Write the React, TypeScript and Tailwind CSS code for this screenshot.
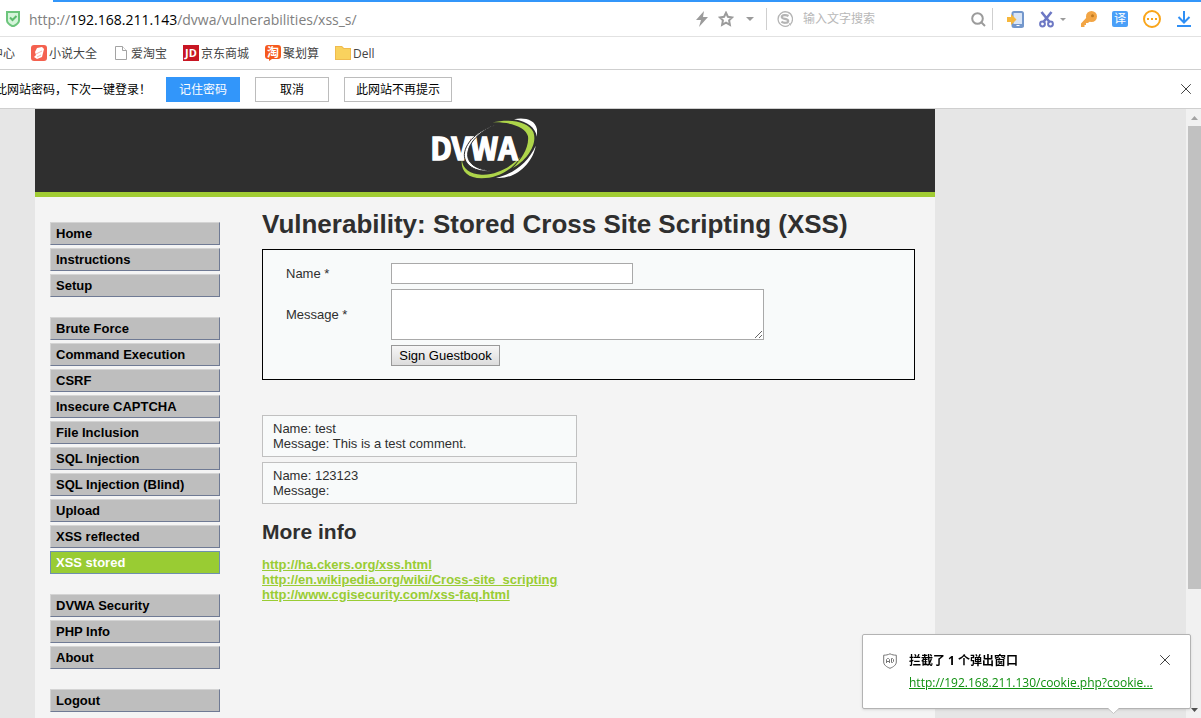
import React, { useState } from 'react'
import { X } from 'lucide-react'

interface Entry { name: string; message: string }

const MENU: string[][] = [
  ['Home', 'Instructions', 'Setup'],
  ['Brute Force', 'Command Execution', 'CSRF', 'Insecure CAPTCHA', 'File Inclusion', 'SQL Injection', 'SQL Injection (Blind)', 'Upload', 'XSS reflected', 'XSS stored'],
  ['DVWA Security', 'PHP Info', 'About'],
  ['Logout'],
]

const ENTRIES: Entry[] = [
  { name: 'test', message: 'This is a test comment.' },
  { name: '123123', message: '' },
]

const LINKS = [
  'http://ha.ckers.org/xss.html',
  'http://en.wikipedia.org/wiki/Cross-site_scripting',
  'http://www.cgisecurity.com/xss-faq.html',
]

// ─── Toolbar icons ───
const ShieldIcon = () => (
  <svg width="14" height="16" viewBox="0 0 14 16" fill="none">
    <path d="M1 1h12v8.500c0 3-3 4.500-6 6-3-1.500-6-3-6-6z" fill="#d5f5da" stroke="#6cc57c" strokeWidth="2" />
    <path d="M4 6.500l2.500 2.500L10.500 5" stroke="#5cbb6d" strokeWidth="2" />
  </svg>
)

const BoltIcon = () => (
  <svg width="12" height="16" viewBox="0 0 12 16" fill="#9b9b9b">
    <path d="M8 0L0 9h5l-2 7 9-10H7z" />
  </svg>
)

const StarIcon = () => (
  <svg width="16" height="16" viewBox="0 0 16 16" fill="none" stroke="#9b9b9b" strokeWidth="2">
    <path d="M8 1.800l1.900 4 4.300.6-3.100 3 .8 4.400L8 11.700l-3.900 2.100.8-4.400-3.100-3 4.300-.6z" />
  </svg>
)

const Caret: React.FC<{ size?: number }> = ({ size = 8 }) => (
  <svg width={size} height={size / 2} viewBox="0 0 8 4" fill="#9b9b9b"><path d="M0 0h8L4 4z" /></svg>
)

const SogouIcon = () => (
  <svg width="16" height="16" viewBox="0 0 16 16" fill="none" stroke="#b4b4b4">
    <path d="M13.500 13A7.200 7.200 0 1 0 12 14.200" strokeWidth="1.300" />
    <path d="M11.500 5C9.500 3.700 4.800 3.700 4.800 6c0 2.500 6.400 1.300 6.400 3.900 0 2.400-4.700 2.300-6.800.8" strokeWidth="2.200" />
    <path d="M12 12.500l1.800 1.800" strokeWidth="1.300" />
  </svg>
)

const SearchIcon = () => (
  <svg width="15" height="15" viewBox="0 0 15 15" fill="none" stroke="#9b9b9b" strokeWidth="2">
    <circle cx="6.500" cy="6.500" r="5.300" />
    <path d="M10.500 10.500l3.500 3.500" />
  </svg>
)

const PhoneIcon = () => (
  <svg width="17" height="17" viewBox="0 0 17 17">
    <rect x="5.500" y="1" width="10.500" height="15" rx="1.500" fill="#d9e5f6" stroke="#7397cc" strokeWidth="2" />
    <path d="M5 13h11.500v3H5z" fill="#7397cc" />
    <path d="M9.500 14h3v1h-3z" fill="#fff" />
    <path d="M0 6h4V3l5.500 5.500L4 14v-3H0z" fill="#f6b73c" />
  </svg>
)

const ScissorsIcon = () => (
  <svg width="16" height="17" viewBox="0 0 16 17" fill="none" stroke="#6d78c4">
    <path d="M2.500 1l8.500 10.500M12.500 1L4 11.500" strokeWidth="2.600" />
    <circle cx="3.500" cy="13" r="2.400" strokeWidth="2" />
    <circle cx="11.500" cy="13" r="2.400" strokeWidth="2" />
  </svg>
)

const KeyIcon = () => (
  <svg width="16" height="16" viewBox="0 0 16 16" fill="#f2a545">
    <circle cx="10.500" cy="5.500" r="5.500" />
    <path d="M6 6L0 12.500V16h3.500v-2H5v-2h2l3-3z" />
    <circle cx="11.500" cy="4.800" r="1.500" fill="#c17a20" />
  </svg>
)

const MoreIcon = () => (
  <svg width="18" height="18" viewBox="0 0 18 18" fill="#f9a51a">
    <circle cx="9" cy="9" r="8" fill="none" stroke="#f9a51a" strokeWidth="2" />
    <path d="M4 8h2v2H4zM8 8h2v2H8zM12 8h2v2h-2z" />
  </svg>
)

const DownloadIcon = () => (
  <svg width="14" height="16" viewBox="0 0 14 16" fill="none" stroke="#2f8ff5" strokeWidth="2">
    <path d="M7 0v11M1.500 6L7 11.500 12.500 6M0 15h14" />
  </svg>
)

// ─── Bookmark icons ───
const NovelIcon = () => (
  <svg width="16" height="16" viewBox="0 0 16 16">
    <rect width="16" height="16" rx="3" fill="#f4614f" />
    <path d="M6 3l5-1 2 2-1 4-1 4-5 2-3-2 2-2-1-3z" fill="#fff" />
    <path d="M5 9l6-3M6 12l4-2" stroke="#f7b5ad" />
  </svg>
)

const PageIcon = () => (
  <svg width="16" height="16" viewBox="0 0 16 16" fill="#fff" stroke="#a3a3a3">
    <path d="M2.500 1.500h7l4 4v9h-11z" />
    <path d="M9.500 1.500v4h4" />
  </svg>
)

const JdIcon = () => (
  <svg width="16" height="16" viewBox="0 0 16 16">
    <rect width="16" height="16" fill="#c81623" />
    <text x="8" y="12" textAnchor="middle" fontSize="11" fontWeight="bold" fill="#fff" fontFamily="Open Sans, sans-serif">JD</text>
  </svg>
)

const TaoIcon = () => (
  <svg width="16" height="16" viewBox="0 0 16 16" overflow="visible">
    <path d="M3 0h10a3 3 0 0 1 3 3v8a3 3 0 0 1-3 3H7l-3 2v-2H3a3 3 0 0 1-3-3V3a3 3 0 0 1 3-3z" fill="#f5591c" />
    <text x="8" y="12" textAnchor="middle" fontSize="12" fontWeight="bold" fill="#fff" fontFamily="Noto Sans CJK SC, sans-serif">淘</text>
  </svg>
)

const FolderIcon = () => (
  <svg width="16" height="14" viewBox="0 0 16 14">
    <path d="M0 0h7l2 2h7v12H0z" fill="#f0bb4e" />
    <path d="M1 1h5.500l2 2H15v10H1z" fill="#f9d25e" />
  </svg>
)

const AdShieldIcon = () => (
  <svg width="14" height="16" viewBox="0 0 14 16" fill="none" stroke="#777">
    <path d="M7 .8c2 1 4 1.400 6.300 1.400V9c0 3-3 5-6.300 6.300C3.700 14 .7 12 .7 9V2.200C3 2.200 5 1.800 7 .8z" />
    <path d="M3.500 10V6.500l1-1h1l1 1V10M3.500 8.500h3M8.500 5.500v4h1l1-1v-2l-1-1z" />
  </svg>
)

const Logo = () => (
  <svg width="106" height="61" viewBox="0 0 318 183" overflow="visible" aria-label="DVWA">
    <g transform="translate(-96 -41)">
      <path d="M186 165c0 30 29 48 64 46 45-2 80-22 112-54-27 43-72 65-117 65-45 0-65-27-59-57z" fill="#aed54a" />
      <text x="91" y="166" fontSize="91" fontWeight="bold" fill="#fff" stroke="#fff" strokeWidth="4" fontFamily="Noto Sans CJK SC, sans-serif">DVWA</text>
      <path d="M302 60C250 70 205 110 203 150c-1 30 32 47 72 50-50 5-83-18-82-50 3-40 52-82 109-90z" fill="#fff" stroke="#2f2f2f" strokeWidth="3" />
      <path d="M278 54c52-12 107-3 122 29 14 37-21 86-62 108 25-25 50-60 46-95-6-28-54-44-106-42z" fill="#aed54a" />
      <path d="M342 45c28-6 63-1 69 30v22c-6-27-26-45-69-52z" fill="#fff" />
      <path d="M407 124c-7 48-57 102-119 97 47-10 97-45 119-97z" fill="#fff" />
    </g>
  </svg>
)

const BOOKMARKS = [
  { label: '小说大全', icon: <NovelIcon /> },
  { label: '爱淘宝', icon: <PageIcon /> },
  { label: '京东商城', icon: <JdIcon /> },
  { label: '聚划算', icon: <TaoIcon /> },
  { label: 'Dell', icon: <FolderIcon /> },
]

const Toolbar = () => (
  <header className="shrink-0 bg-white">
    <div className="ml-[53px] h-0.5 bg-[#3296fa]" />
    <div className="flex h-[35px] items-center border-b border-[#e2e2e2] pl-1.5 pr-2.5">
      <ShieldIcon />
      <div className="ml-[9px] flex-1 truncate font-['Open_Sans',sans-serif] text-[14px] text-[#808080]">
        http://<span className="text-black">192.168.211.143</span>/dvwa/vulnerabilities/xss_s/
      </div>
      <div className="flex items-center">
        <button aria-label="Speed mode"><BoltIcon /></button>
        <button aria-label="Bookmark" className="ml-2.5"><StarIcon /></button>
        <button aria-label="History" className="ml-3 flex"><Caret /></button>
      </div>
      <div className="ml-3 flex h-[22px] w-[227px] items-center border-x border-[#cfcfcf] pl-2.5 pr-1.5">
        <SogouIcon />
        <input aria-label="搜索" placeholder="输入文字搜索" className="ml-2.5 min-w-0 flex-1 text-[12px] outline-none placeholder:text-[#b8b8b8]" />
        <button aria-label="Search"><SearchIcon /></button>
      </div>
      <div className="ml-3.5 flex items-center gap-[15px]">
        <button aria-label="Send to phone"><PhoneIcon /></button>
        <button aria-label="Screenshot" className="flex items-center gap-[5px]"><ScissorsIcon /><Caret size={6} /></button>
        <button aria-label="Passwords"><KeyIcon /></button>
        <button aria-label="Translate" className="h-4 w-4 rounded-xs bg-[#4a9ff8] text-[12px] leading-4 text-white">译</button>
        <button aria-label="More"><MoreIcon /></button>
        <button aria-label="Downloads" className="pl-px"><DownloadIcon /></button>
      </div>
    </div>
  </header>
)

const Bookmarks = () => (
  <nav className="flex h-[33px] shrink-0 items-center gap-4 overflow-hidden border-b border-[#cfcfcf] bg-white text-[12px] text-[#444]">
    <a href="#center" className="-ml-[9px] pt-0.5 whitespace-nowrap">中心</a>
    {BOOKMARKS.map(b => (
      <a key={b.label} href="#bookmark" className="flex items-center gap-0.5 whitespace-nowrap">{b.icon}<span className="pt-0.5">{b.label}</span></a>
    ))}
  </nav>
)

const PasswordBar = () => (
  <div className="flex h-[39px] shrink-0 items-center overflow-hidden border-b border-[#cfcfcf] bg-white pr-1.5 text-[12px] text-black">
    <span className="-ml-[5px] pt-0.5 whitespace-nowrap">此网站密码，下次一键登录！</span>
    <div className="ml-[15px] flex flex-1 gap-[15px]">
      <button className="h-[25px] w-[74px] bg-[#3296fa] pt-0.5 text-white">记住密码</button>
      <button className="h-[25px] w-[74px] border border-[#bcbcbc] pt-0.5">取消</button>
      <button className="h-[25px] w-[108px] border border-[#bcbcbc] pt-0.5">此网站不再提示</button>
    </div>
    <button aria-label="关闭"><X size={18} strokeWidth={1} /></button>
  </div>
)

const SideMenu = () => (
  <nav className="flex w-[170px] shrink-0 flex-col gap-5">
    {MENU.map(group => (
      <ul key={group[0]} className="flex flex-col gap-[3px]">
        {group.map(item => (
          <li key={item}>
            <a
              href="#menu"
              className={item === 'XSS stored'
                ? 'block h-[23px] border border-[#6f8fae] bg-[#99cc33] pl-[5px] text-[13px] leading-[21px] font-bold text-white'
                : 'block h-[23px] border border-t-[#d4d4d4] border-r-[#6f7a94] border-b-[#6f7a94] border-l-[#d4d4d4] bg-[#bebebe] pl-[5px] text-[13px] leading-[21px] font-bold text-black'}
            >
              {item}
            </a>
          </li>
        ))}
      </ul>
    ))}
  </nav>
)

const Guestbook = () => {
  const [name, setName] = useState('')
  const [message, setMessage] = useState('')

  return (
    <form onSubmit={e => e.preventDefault()} className="grid grid-cols-[105px_1fr] items-center gap-y-[5px] border border-black bg-[#f8fafa] py-[13px] pl-[23px]">
      <label htmlFor="name">Name *</label>
      <input id="name" value={name} onChange={e => setName(e.target.value)} className="h-[21px] w-[242px] border border-[#a9a9a9] bg-white px-1" />
      <label htmlFor="message">Message *</label>
      <textarea id="message" value={message} onChange={e => setMessage(e.target.value)} className="block h-[51px] w-[373px] resize border border-[#a9a9a9] bg-white px-1" />
      <button className="col-start-2 h-[21px] w-[109px] border border-[#999] bg-linear-to-b from-[#f6f6f6] to-[#dcdcdc] leading-[19px] whitespace-nowrap text-black">Sign Guestbook</button>
    </form>
  )
}

const Scrollbar = () => (
  <div className="flex w-[15px] shrink-0 flex-col items-end overflow-hidden bg-[#f1f1f1]">
    <div className="flex h-[17px] w-full items-center justify-center pl-0.5">
      <svg width="7" height="4" viewBox="0 0 7 4" fill="#a3a3a3"><path d="M3.500 0L7 4H0z" /></svg>
    </div>
    <div className="h-[76%] w-[13px] bg-[#c1c1c1]" />
    <div className="mt-auto flex h-[17px] w-full items-center justify-center pl-0.5">
      <svg width="7" height="4" viewBox="0 0 7 4" fill="#505050"><path d="M0 0h7L3.500 4z" /></svg>
    </div>
  </div>
)

const PopupNotice: React.FC<{ onClose: () => void }> = ({ onClose }) => (
  <div className="fixed right-2.5 bottom-[9px] flex h-[75px] w-[329px] items-start rounded-xs border border-[#b3b3b3] bg-white pt-4 pr-4 pl-5 text-[12px] text-black shadow-sm">
    <span className="pt-0.5"><AdShieldIcon /></span>
    <div className="ml-3 flex-1">
      <div className="leading-5 font-bold">拦截了 1 个弹出窗口</div>
      <a href="#blocked" className="mt-0.5 block font-['Open_Sans',sans-serif] leading-5 whitespace-nowrap text-[#109010] underline">http://192.168.211.130/cookie.php?cookie...</a>
    </div>
    <button aria-label="关闭" onClick={onClose}><X size={18} strokeWidth={1} /></button>
    <svg className="absolute right-[71px] -bottom-1.5" width="11" height="6" viewBox="0 0 11 6">
      <path d="M0 0h11L5.500 5.500z" fill="#fff" />
      <path d="M0 .5L5.500 5.500 11 .5" fill="none" stroke="#c4c4c4" />
    </svg>
  </div>
)

export default function App() {
  const [notice, setNotice] = useState(true)

  return (
    <div className="flex h-screen flex-col overflow-hidden bg-[#e6e6e6] font-['Open_Sans','Noto_Sans_CJK_SC',sans-serif]">
      <Toolbar />
      <Bookmarks />
      <PasswordBar />

      <div className="flex min-h-0 flex-1">
        <div className="min-w-0 flex-1 overflow-hidden pl-[35px] font-['Liberation_Sans',Arial,sans-serif] text-[13px] leading-[15px] text-[#2f2f2f]">
          <div className="min-h-full w-full max-w-[900px] bg-[#f4f4f4]">
            <div className="flex h-[88px] items-center justify-center border-b-5 border-[#a1cc33] bg-[#2f2f2f] pb-1">
              <Logo />
            </div>

            <div className="flex pr-5 pl-[15px]">
              <div className="pt-[25px]"><SideMenu /></div>

              <main className="ml-[42px] min-w-0 flex-1 pt-3">
                <h1 className="mb-2.5 text-[26px] leading-[30px] font-bold whitespace-nowrap">Vulnerability: Stored Cross Site Scripting (XSS)</h1>
                <Guestbook />

                <div className="mt-[35px] flex w-[315px] flex-col gap-[5px]">
                  {ENTRIES.map(e => (
                    <div key={e.name} className="border border-[#c0c0c0] bg-[#f8fafa] px-2.5 py-[5px]">
                      <p>Name: {e.name}</p>
                      <p>Message: {e.message}</p>
                    </div>
                  ))}
                </div>

                <h2 className="mt-4 mb-[13px] text-[21px] leading-6 font-bold">More info</h2>
                <ul>
                  {LINKS.map(l => (
                    <li key={l}><a href={l} className="font-bold text-[#99cc33] underline">{l}</a></li>
                  ))}
                </ul>
              </main>
            </div>
          </div>
        </div>
        <Scrollbar />
      </div>

      {notice && <PopupNotice onClose={() => setNotice(false)} />}
    </div>
  )
}
